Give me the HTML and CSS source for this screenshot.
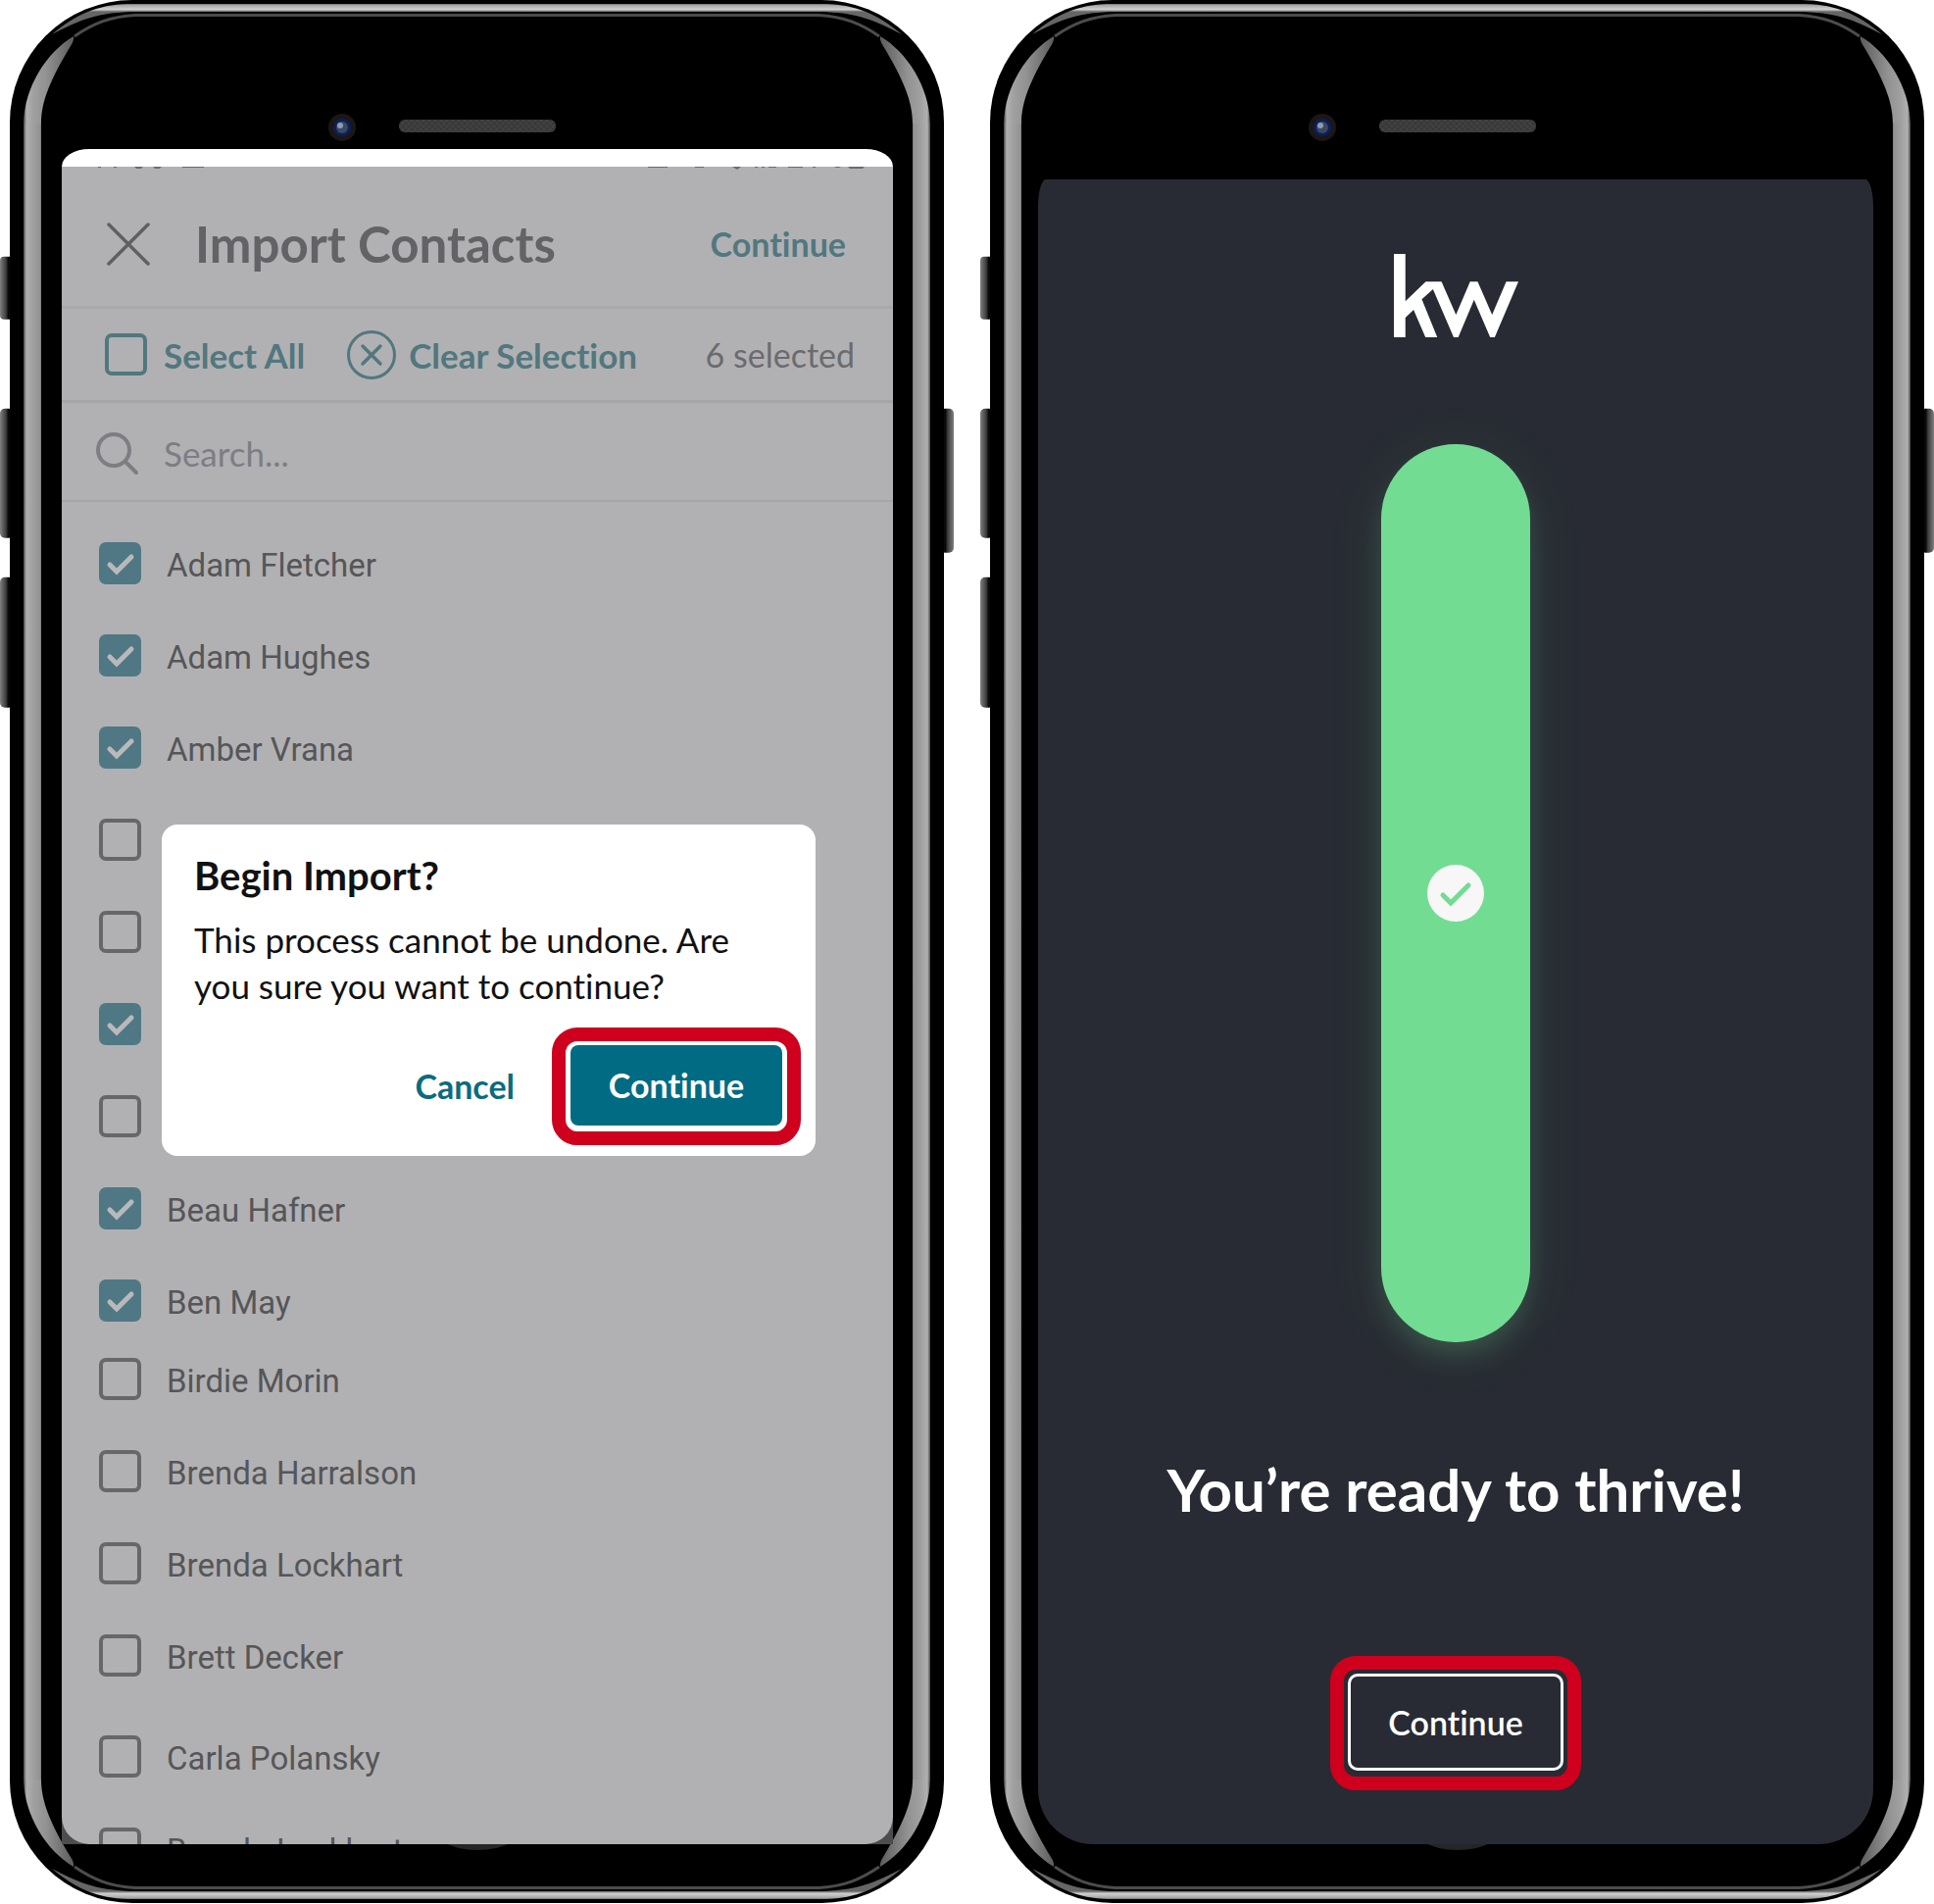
FILE: index.html
```html
<!DOCTYPE html>
<html lang="en">
<head>
<meta charset="utf-8">
<meta name="viewport" content="width=device-width, initial-scale=1">
<title>Import Contacts</title>
<link rel="stylesheet" href="styles.css">
</head>
<body>
<svg class="defs" aria-hidden="true">
  <defs>
    <linearGradient id="side" x1="24" x2="43" y1="0" y2="0" gradientUnits="userSpaceOnUse">
      <stop offset="0" stop-color="#444"/><stop offset=".15" stop-color="#b0b0b0"/>
      <stop offset=".5" stop-color="#a0a0a0"/><stop offset=".9" stop-color="#929292"/><stop offset="1" stop-color="#555"/>
    </linearGradient>
    <linearGradient id="curve" x1="24" x2="75" y1="0" y2="0" gradientUnits="userSpaceOnUse">
      <stop offset="0" stop-color="#444"/><stop offset=".06" stop-color="#b0b0b0"/>
      <stop offset=".2" stop-color="#a0a0a0"/><stop offset=".45" stop-color="#929292"/><stop offset="1" stop-color="#5c5c5c"/>
    </linearGradient>
    <linearGradient id="edge" x1="0" x2="0" y1="3" y2="12" gradientUnits="userSpaceOnUse">
      <stop offset="0" stop-color="#555"/><stop offset=".3" stop-color="#aaa"/>
      <stop offset=".75" stop-color="#d0d0d0"/><stop offset="1" stop-color="#666"/>
    </linearGradient>
    <linearGradient id="key" x1="0" x2="1" y1="0" y2="0">
      <stop offset="0" stop-color="#808080"/><stop offset=".45" stop-color="#3a3a3a"/><stop offset=".6" stop-color="#080808"/><stop offset="1" stop-color="#111"/>
    </linearGradient>
    <pattern id="mesh" width="6" height="6" patternUnits="userSpaceOnUse">
      <rect width="6" height="6" fill="#404040"/><path d="M0 0l6 6M6 0l-6 6" stroke="#353535"/>
    </pattern>
    <g id="corner">
      <path d="M24 973V125H42V973z" fill="url(#side)"/>
      <path d="M24 126C25 88 48 53 75 37Q76 41 72 47C52 80 42 103 42 126z" fill="url(#curve)"/>
      <path d="M488 4H130C100 5 78 14 53 35C80 21 100 12 140 12H488z" fill="url(#edge)"/>
      <path d="M488 15.500H138C112 17 95 24 76 37" fill="none" stroke="#4c4c4c" stroke-width="3"/>
    </g>
    <symbol id="bezel" viewBox="0 0 973 1942" preserveAspectRatio="none">
      <g fill="url(#key)">
        <rect y="262" width="14" height="64" rx="4"/>
        <rect y="417" width="14" height="132" rx="5"/>
        <rect y="589" width="14" height="133" rx="5"/>
        <rect y="417" width="14" height="147" rx="5" transform="matrix(-1 0 0 1 973 0)"/>
      </g>
      <rect x="10" width="953" height="1942" rx="125"/>
      <use href="#corner"/>
      <use href="#corner" transform="matrix(-1 0 0 1 973 0)"/>
      <use href="#corner" transform="matrix(1 0 0 -1 0 1942)"/>
      <use href="#corner" transform="matrix(-1 0 0 -1 973 1942)"/>
      <circle cx="349" cy="130" r="14" fill="#1d1617"/>
      <circle cx="349" cy="130" r="9" fill="#0a1f5c"/>
      <circle cx="349" cy="130" r="6" fill="#3b4861"/>
      <circle cx="347" cy="128" r="3" fill="#8f9bb0"/>
      <rect x="407" y="122" width="160" height="13" rx="6" fill="url(#mesh)"/>
      <ellipse cx="487" cy="1860" rx="50" ry="28" fill="#252525"/>
    </symbol>
  </defs>
</svg>

<main class="phones">
  <section class="phone phone-import" aria-label="Import contacts">
    <svg class="bezel" aria-hidden="true"><use href="#bezel"/></svg>
    <div class="screen">
      <div class="notch-strip"></div>
      <div class="backing">
        <div class="app">
          <svg class="status" width="785" height="4" viewBox="0 0 785 4" aria-hidden="true">
            <path d="M0 0h3v1h-3zM16 0h3v1h-3zM37 0h9l-2 2h-5zM56 0h9l-2 2h-5zM86 0h22v1h-22zM561 0h20v1h-20zM609 0h9v1h-9zM647 0h9l-4 3zM670 0h3v1h-3zM677 0h3v1h-3zM684 0h8v1h-8zM704 0h15v1h-15zM729 0h3v1h-3zM751 0h7l-2 1h-3zM765 0h17l-2 2h-13z" fill="#6b6b6f"/>
          </svg>
          <header class="topbar">
            <button class="icon-button" type="button" aria-label="Close">
              <svg width="44" height="44" viewBox="0 0 44 44"><path d="M2 2l40 40M42 2L2 42" stroke="#5f5f64" stroke-width="3.500" stroke-linecap="round"/></svg>
            </button>
            <h1>Import Contacts</h1>
            <button class="text-button" type="button">Continue</button>
          </header>
          <div class="toolbar">
            <label class="select-all"><input class="box box-teal" type="checkbox">Select All</label>
            <button class="text-button clear" type="button">
              <svg width="50" height="50" viewBox="0 0 50 50" fill="none" stroke="#52777f" stroke-linecap="round"><circle cx="25" cy="25" r="23.500" stroke-width="3"/><path d="M16 16l18 18M34 16L16 34" stroke-width="3.500"/></svg>
              Clear Selection
            </button>
            <span class="count">6 selected</span>
          </div>
          <label class="search">
            <svg width="44" height="44" viewBox="0 0 44 44" fill="none" stroke="#7d7d84" stroke-width="4" stroke-linecap="round" aria-hidden="true"><circle cx="18" cy="18" r="16"/><path d="M30 30l11 11"/></svg>
            <input type="text" placeholder="Search..." aria-label="Search">
          </label>
          <div class="contacts">
            <ul>
              <li><label><input class="box" type="checkbox" checked>Adam Fletcher</label></li>
              <li><label><input class="box" type="checkbox" checked>Adam Hughes</label></li>
              <li><label><input class="box" type="checkbox" checked>Amber Vrana</label></li>
              <li><input class="box" type="checkbox" aria-label="Contact 4"></li>
              <li><input class="box" type="checkbox" aria-label="Contact 5"></li>
              <li><input class="box" type="checkbox" aria-label="Contact 6" checked></li>
              <li><input class="box" type="checkbox" aria-label="Contact 7"></li>
              <li><label><input class="box" type="checkbox" checked>Beau Hafner</label></li>
              <li><label><input class="box" type="checkbox" checked>Ben May</label></li>
            </ul>
            <ul class="second">
              <li><label><input class="box" type="checkbox">Birdie Morin</label></li>
              <li><label><input class="box" type="checkbox">Brenda Harralson</label></li>
              <li><label><input class="box" type="checkbox">Brenda Lockhart</label></li>
              <li><label><input class="box" type="checkbox">Brett Decker</label></li>
            </ul>
            <ul class="third">
              <li><label><input class="box" type="checkbox">Carla Polansky</label></li>
              <li class="peek"><label><input class="box" type="checkbox">Brenda Lockhart</label></li>
            </ul>
          </div>
        </div>
      </div>
      <div class="dialog" role="dialog" aria-labelledby="dialog-title">
        <h2 id="dialog-title">Begin Import?</h2>
        <p>This process cannot be undone. Are<br>you sure you want to continue?</p>
        <div class="actions">
          <button class="cancel" type="button">Cancel</button>
          <div class="highlight"><button class="primary" type="button">Continue</button></div>
        </div>
      </div>
    </div>
  </section>

  <section class="phone phone-ready" aria-label="Import complete">
    <svg class="bezel" aria-hidden="true"><use href="#bezel"/></svg>
    <div class="ready">
      <svg class="logo" width="127" height="85" viewBox="133 88 379 253" role="img" aria-label="kw"><path fill="#fff" d="M133 88H168V232L230 172H278L322 273L365 172H388L432 273L475 172H512L440 341H426L377 227L329 341H315L252 195L218 226L265 341H229L193 258L168 282V341H133z"/></svg>
      <div class="pill">
        <svg width="58" height="58" viewBox="0 0 58 58" role="img" aria-label="Done"><circle cx="29" cy="29" r="29" fill="#f7f7f7"/><path d="M16 31l8 8 18-18" fill="none" stroke="#73dc93" stroke-width="5" stroke-linecap="round"/></svg>
      </div>
      <h2>You’re ready to thrive!</h2>
      <div class="highlight"><button class="outline" type="button">Continue</button></div>
    </div>
  </section>
</main>
</body>
</html>
```

FILE: styles.css
```css
* {
  box-sizing: border-box;
}

body {
  margin: 0;
  background: #fff;
  font-family: Lato, "Noto Sans", sans-serif;
  font-size: 34px;
  font-variant-ligatures: none;
  line-height: 48px;
}

h1,
h2,
p,
ul {
  margin: 0;
  padding: 0;
}

svg {
  display: block;
  flex: none;
}

button {
  padding: 0;
  border: 0;
  background: none;
  font: inherit;
  font-variant-ligatures: none;
  font-weight: 700;
  cursor: pointer;
}

.defs {
  position: absolute;
  width: 0;
  height: 0;
}

/* Device frames */
.phones {
  display: grid;
  grid-template-columns: repeat(2, minmax(0, 1fr));
  gap: 27px;
}

.phone {
  position: relative;
  display: flex;
  flex-direction: column;
}

.phone-import {
  padding: 152px 62px 60px 63px;
}

.phone-ready {
  padding: 183px 62px 60px 59px;
}

.bezel {
  position: absolute;
  inset: 0;
  width: 100%;
  height: 100%;
}

/* Import screen */
.screen {
  position: relative;
}

.notch-strip {
  height: 18px;
  border-radius: 28px 28px 0 0 / 18px 18px 0 0;
  background: #fff;
}

.backing {
  background: #4d4d4f;
}

.app {
  border-radius: 0 0 28px 28px;
  background: #b1b1b3;
  overflow: hidden;
}

.status {
  margin-left: 37px;
}

.topbar {
  display: flex;
  align-items: center;
  height: 141px;
  padding: 11px 48px 0 46px;
  border-bottom: 3px solid #a9a9ac;
}

.topbar h1 {
  flex: 1;
  margin-left: 46px;
  color: #636367;
  font-size: 51px;
}

.text-button,
.select-all {
  color: #52777f;
  font-weight: 700;
}

.toolbar {
  display: flex;
  align-items: center;
  height: 96px;
  padding: 0 39px 0 44px;
  border-bottom: 3px solid #a6a6a9;
}

.select-all {
  display: flex;
  align-items: center;
  gap: 17px;
  font-size: 35px;
}

.clear {
  display: flex;
  align-items: center;
  gap: 13px;
  margin-left: 43px;
  font-size: 35px;
}

.count {
  margin-left: auto;
  color: #6b6b6f;
}

.search {
  display: flex;
  align-items: center;
  gap: 25px;
  height: 101px;
  padding: 5px 35px 0;
  border-bottom: 2px solid #a6a6a9;
}

.search input {
  flex: 1;
  min-width: 0;
  padding: 0 0 2px;
  border: 0;
  background: none;
  font: inherit;
  font-size: 35px;
}

.search input::placeholder {
  color: #7d7d84;
  opacity: 1;
}

.box {
  display: block;
  appearance: none;
  flex: none;
  width: 43px;
  height: 43px;
  margin: 0;
  border: 4px solid #66666b;
  border-radius: 7px;
}

.box-teal {
  border-color: #52777f;
}

.box:checked {
  border: 0;
  background: #4f7884 url("data:image/svg+xml,%3Csvg xmlns='http://www.w3.org/2000/svg' viewBox='0 0 43 43'%3E%3Cpath d='M11 23l7 7 15-15' fill='none' stroke='%23b9b9bb' stroke-width='5' stroke-linecap='round'/%3E%3C/svg%3E");
}

.contacts {
  padding: 41px 38px 0;
  color: #565658;
  font-family: Roboto, sans-serif;
  font-size: 33px;
}

.contacts ul {
  display: flex;
  flex-direction: column;
  gap: 51px;
  list-style: none;
}

.contacts li {
  height: 43px;
}

.contacts label {
  display: flex;
  align-items: flex-start;
  gap: 26px;
}

.contacts .second {
  margin-top: 37px;
}

.contacts .third {
  margin-top: 60px;
}

.contacts .peek {
  height: 17px;
  overflow: hidden;
}

/* Confirmation dialog */
.dialog {
  position: absolute;
  top: 689px;
  left: 102px;
  right: 79px;
  padding: 28px 15px 11px 33px;
  border-radius: 16px;
  background: #fff;
  color: #111;
}

.dialog h2 {
  font-size: 40px;
}

.dialog p {
  margin-top: 18px;
  font-size: 35px;
  line-height: 47px;
}

.actions {
  display: flex;
  align-items: center;
  justify-content: flex-end;
  gap: 38px;
  margin-top: 19px;
}

.cancel {
  color: #0b6b7f;
}

.highlight {
  border: 14px solid #ce001e;
  border-radius: 26px;
}

.primary {
  display: block;
  width: 216px;
  height: 82px;
  margin: 4px 5px 6px;
  border-radius: 8px;
  background: #006b83;
  color: #fff;
}

/* Completion screen */
.ready {
  position: relative;
  display: flex;
  flex: 1;
  flex-direction: column;
  align-items: center;
  padding: 76px 0 55px;
  border-radius: 8px 8px 56px 56px / 28px 28px 56px 56px;
  background: #282b33;
  color: #fff;
}

.pill {
  display: flex;
  flex: 1;
  align-items: center;
  justify-content: center;
  width: 152px;
  margin-top: 109px;
  border-radius: 76px;
  background: #73dc93;
  box-shadow: 0 16px 32px -8px rgba(115, 220, 147, .25), 0 8px 56px rgba(115, 220, 147, .1);
}

.ready h2 {
  margin-top: 118px;
  font-size: 60px;
  line-height: 64px;
}

.ready .highlight {
  margin-top: 138px;
}

.outline {
  display: block;
  width: 220px;
  height: 99px;
  margin: 4px 4px 6px;
  border: 3px solid #fff;
  border-radius: 10px;
  color: #fff;
  font-weight: 600;
}
```
